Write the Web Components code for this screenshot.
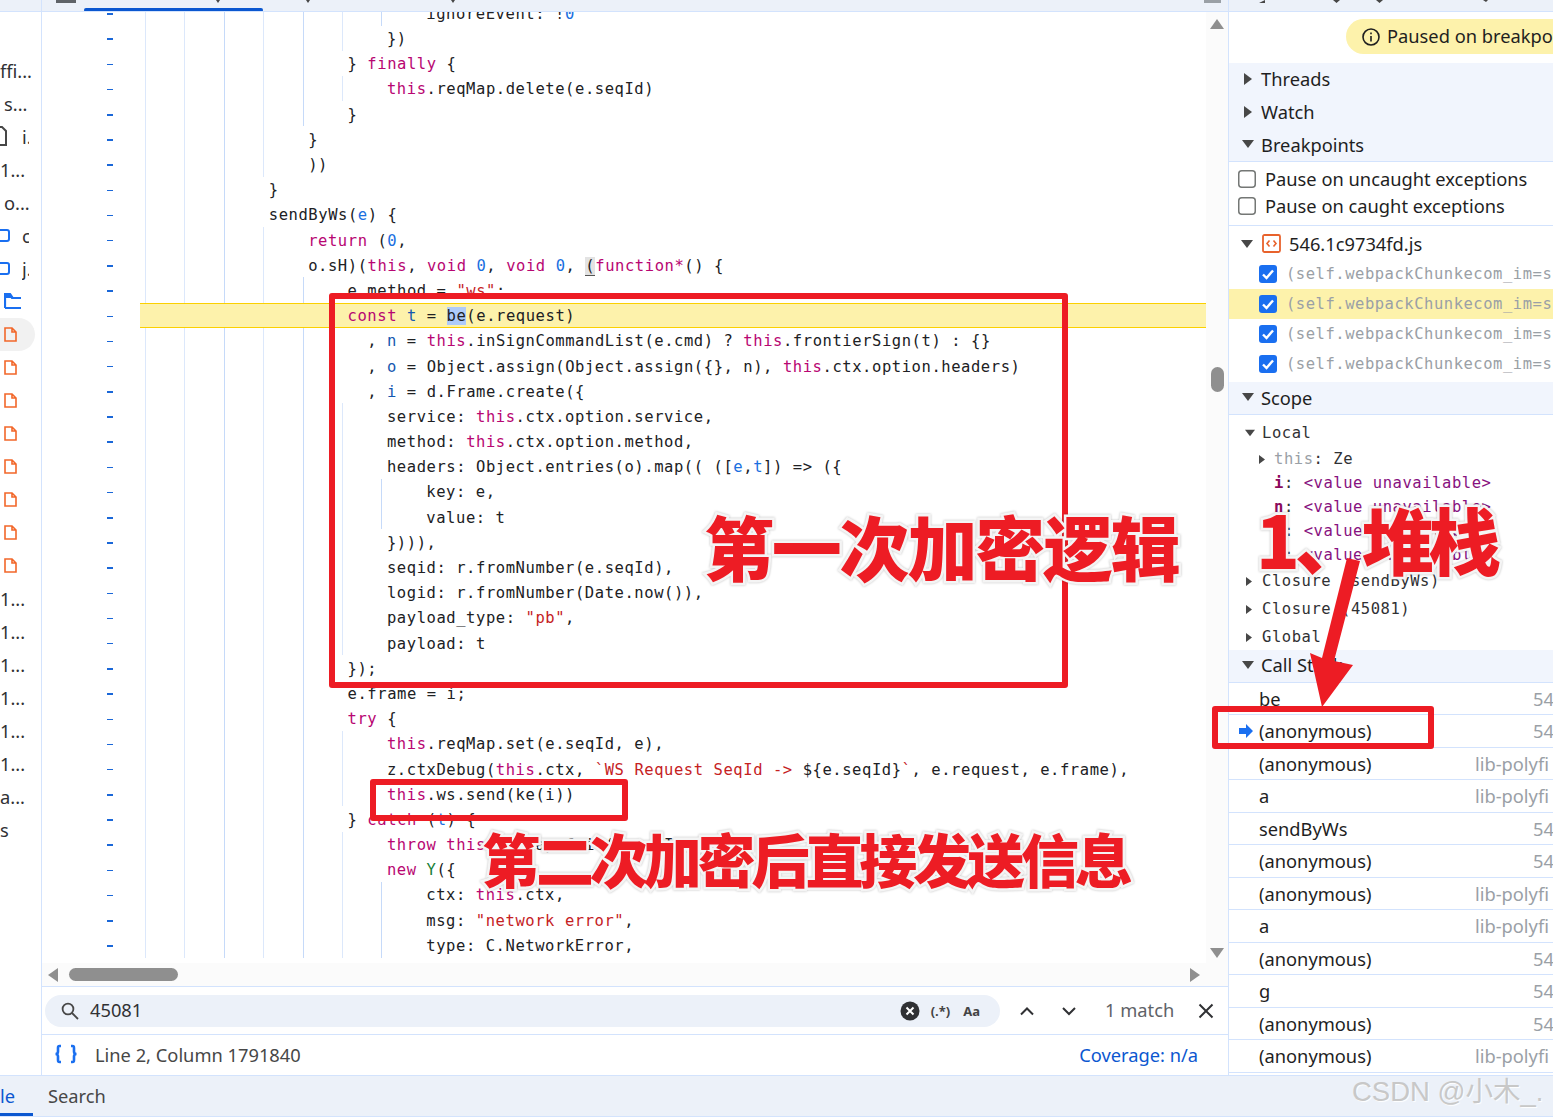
<!DOCTYPE html>
<html lang="en"><head><meta charset="utf-8"><title>DevTools Sources</title>
<style>html,body{margin:0;padding:0;background:#fff}</style></head>
<body><dt-app></dt-app>
<script>
const UI='"Noto Sans","Noto Sans CJK SC",sans-serif';
const MONO='"DejaVu Sans Mono",monospace';
const BL='#d3e3fd';
function def(name,css,html,extra){
  customElements.define(name,class extends HTMLElement{
    connectedCallback(){ if(this.shadowRoot) return;
      const r=this.attachShadow({mode:'open'});
      r.innerHTML='<style>'+css+'</style>'+(typeof html==='function'?html(this):html);
      if(extra) extra(this,r);
    }
  });
}
/* ---------- code line ---------- */
def('code-line',`
:host{display:flex;height:var(--lh);white-space:pre;align-items:stretch;box-sizing:border-box}
.gut{flex:none;width:98px;display:flex;align-items:center;padding-top:2px;box-sizing:border-box}
.gut i{display:block;width:6px;height:1.5px;background:#1a67d8;margin-left:65px}
.body{flex:1;display:flex;padding-left:5px;min-width:0}
.g{flex:none;width:39.4px;box-sizing:border-box;border-left:1px solid #dce8fb}
.g.s{border-left-color:#c6daf9}
.t{padding-left:5.6px;padding-top:1.5px;line-height:var(--lh)}
:host([hl]) .body{background:#fdf2ab;border-top:1px solid #fbd000;border-bottom:1px solid #fbd000;margin:0}
:host([hl]) .t{padding-top:0}
:host([hl]) .g{border-left-color:transparent}
`,h=>{
  const ind=+h.getAttribute('indent');const n=Math.floor(ind/4);const ex=ind-n*4;
  let g='';for(let i=0;i<n;i++)g+=`<span class="g${i%2==0&&i>0?' s':''}"></span>`;
  return `<div class="gut"><i></i></div><div class="body">${g}<span class="t" style="margin-left:${ex*9.85}px"><slot></slot></span></div>`;
});
/* ---------- code view ---------- */
const L=[
[28,'ignoreEvent: !<u>0</u>'],[24,'})'],[20,'} <k>finally</k> {'],[24,'<k>this</k>.reqMap.delete(e.seqId)'],[20,'}'],[16,'}'],[16,'))'],[12,'}'],
[12,'sendByWs(<n>e</n>) {'],[16,'<k>return</k> (<u>0</u>,'],[16,'o.sH)(<k>this</k>, <k>void</k> <u>0</u>, <k>void</k> <u>0</u>, <m>(</m><k>function*</k>() {'],
[20,'e.method = <s>"ws"</s>;'],[20,'<k>const</k> <d>t</d> = <h>be</h>(e.request)'],
[22,', <d>n</d> = <k>this</k>.inSignCommandList(e.cmd) ? <k>this</k>.frontierSign(t) : {}'],
[22,', <d>o</d> = Object.assign(Object.assign({}, n), <k>this</k>.ctx.option.headers)'],
[22,', <d>i</d> = d.Frame.create({'],[24,'service: <k>this</k>.ctx.option.service,'],[24,'method: <k>this</k>.ctx.option.method,'],
[24,'headers: Object.entries(o).map(( ([<n>e</n>,<n>t</n>]) =&gt; ({'],[28,'key: e,'],[28,'value: t'],[24,'}))),'],
[24,'seqid: r.fromNumber(e.seqId),'],[24,'logid: r.fromNumber(Date.now()),'],[24,'payload_type: <s>"pb"</s>,'],[24,'payload: t'],[20,'});'],[20,'e.frame = i;'],
[20,'<k>try</k> {'],[24,'<k>this</k>.reqMap.set(e.seqId, e),'],[24,'z.ctxDebug(<k>this</k>.ctx, <s>`WS Request SeqId -&gt; </s>${e.seqId}<s>`</s>, e.request, e.frame),'],
[24,'<k>this</k>.ws.send(ke(i))'],[20,'} <k>catch</k> (<n>t</n>) {'],[24,'<k>throw</k> <k>this</k>.reqMap.fail(e.seqId),'],[24,'<k>new</k> <v>Y</v>({'],
[28,'ctx: <k>this</k>.ctx,'],[28,'msg: <s>"network error"</s>,'],[28,'type: C.NetworkError,']
];
function tok(s){return s.replace(/<(k|u|n|d|s|h|m|v)>/g,'<span class="$1">').replace(/<\/(k|u|n|d|s|h|m|v)>/g,'</span>');}
def('dt-code',`
:host{display:block;flex:1;min-width:0;overflow:hidden;--lh:25.19px;font:15.5px/25.19px ${MONO};letter-spacing:.565px;color:#202124}
.in{margin-top:-11.6px}
.k{color:#b80672}.u{color:#1a6fe0}.n{color:#1a6fe0}.d{color:#1558b0}.s{color:#c5221f}.v{color:#188038}
.h{background:#aecbfa}.m{background:#e3e3e3;border-bottom:1px solid #555}
`,()=>'<div class="in">'+L.map((l,i)=>`<code-line indent="${l[0]}"${i==12?' hl':''}>${tok(l[1])}</code-line>`).join('')+'</div>');
/* ---------- scrollbars ---------- */
def('dt-vscroll',`
:host{display:flex;flex-direction:column;align-items:center;flex:none;width:22px;background:#fbfbfb}
svg{display:block;flex:none}.th{width:13px;height:25px;border-radius:7px;background:#8f8f8f;margin-top:338px;flex:none}
.dn{margin-top:auto;margin-bottom:5px}.up{margin-top:7px}
`,`<svg class="up" width="14" height="10" viewBox="0 0 14 10"><path d="M7 0L14 10H0z" fill="#8f8f8f"/></svg><div class="th"></div><svg class="dn" width="14" height="10" viewBox="0 0 14 10"><path d="M7 10L0 0H14z" fill="#8f8f8f"/></svg>`);
def('dt-hscroll',`
:host{display:flex;align-items:center;flex:none;height:23px;background:#fbfbfb;padding:0 28px 0 6px;box-sizing:border-box}
svg{display:block;flex:none}.th{width:109px;height:13px;border-radius:7px;background:#8f8f8f;margin-left:11px;flex:none}
.r{margin-left:auto}
`,`<svg width="10" height="14" viewBox="0 0 10 14"><path d="M0 7L10 0V14z" fill="#8f8f8f"/></svg><div class="th"></div><svg class="r" width="10" height="14" viewBox="0 0 10 14"><path d="M10 7L0 0V14z" fill="#8f8f8f"/></svg>`);
/* ---------- search bar ---------- */
def('dt-search',`
:host{display:flex;align-items:center;flex:none;height:49px;box-sizing:border-box;border-top:1px solid ${BL};border-bottom:1px solid ${BL};padding:0 12px 0 3px;font:18.3px ${UI};color:#303134}
.pill{flex:none;width:955px;height:32px;border-radius:16px;background:#ecf1f9;display:flex;align-items:center;padding:0 20px 0 15px;box-sizing:border-box}
.v{margin:-2px 0 0 10px;flex:1}.re,.aa{font:bold 13px ${UI};color:#444}.re{margin:0 13px 0 11px}
svg{display:block;flex:none}.m{margin:-2px 0 0 24px;color:#5f6368}.x{margin-left:auto}
`,`<div class="pill"><svg width="20" height="20" viewBox="0 0 20 20" fill="none" stroke="#474747" stroke-width="1.8"><circle cx="8" cy="8" r="5.4"/><path d="M12 12l6 6"/></svg><span class="v">45081</span>
<svg width="20" height="20" viewBox="0 0 20 20"><circle cx="10" cy="10" r="9.5" fill="#303134"/><path d="M6.5 6.5l7 7m0-7l-7 7" stroke="#fff" stroke-width="2"/></svg><span class="re">(.*)</span><span class="aa">Aa</span></div>
<svg style="margin-left:15px" width="24" height="24" viewBox="0 0 24 24" fill="none" stroke="#303134" stroke-width="2"><path d="M6 15.5l6-6 6 6"/></svg>
<svg style="margin-left:18px" width="24" height="24" viewBox="0 0 24 24" fill="none" stroke="#303134" stroke-width="2"><path d="M6 9l6 6 6-6"/></svg>
<span class="m">1 match</span>
<svg class="x" width="20" height="20" viewBox="0 0 20 20" fill="none" stroke="#303134" stroke-width="2"><path d="M3.500 3.500l13 13m0-13l-13 13"/></svg>`);
def('dt-status',`
:host{display:flex;align-items:center;flex:none;height:40px;padding:0 30px 2px 11px;box-sizing:border-box;font:18.3px ${UI};color:#474747}
svg{display:block;flex:none}.t{margin-left:16px}.c{margin-left:auto;color:#0b57d0}
`,`<svg width="26" height="20" viewBox="0 0 24 20" fill="none" stroke="#1a6ff0" stroke-width="2.600"><path d="M7 2H5.500C4 2 4 3 4 4v3.500C4 9 3 10 1.500 10 3 10 4 11 4 12.500V16c0 1 0 2 1.500 2H7M17 2h1.500C20 2 20 3 20 4v3.500c0 1.500 1 2.500 2.500 2.500-1.500 0-2.500 1-2.500 2.500V16c0 1 0 2-1.500 2H17"/></svg><span class="t">Line 2, Column 1791840</span><span class="c">Coverage: n/a</span>`);
def('dt-tabs',`
:host{display:flex;align-items:stretch;flex:none;height:42px;box-sizing:border-box;background:#ecf1f9;border-top:1px solid ${BL};border-bottom:1px solid ${BL};font:18.3px/40px ${UI};color:#474747}
.a{width:33px;color:#0b57d0;border-bottom:3px solid #0b57d0;border-radius:0 3px 0 0;box-sizing:border-box;overflow:hidden}
.b{margin-left:15px}
`,`<span class="a">le</span><span class="b">Search</span>`);
/* ---------- sidebar ---------- */
const doc='<svg width="13" height="15" viewBox="0 0 13 15" fill="none" stroke="#f2672a" stroke-width="1.600"><path d="M1 1h7l4 4v9H1zM8 1v4h4"/></svg>';
const sq='<svg width="10" height="15" viewBox="5 0 10 15" fill="none" stroke="#1a6ff0" stroke-width="2"><rect x="1" y="2" width="13" height="11" rx="2"/></svg>';
const side=[
['ffi...',0],['s...',4],['<svg width="7" height="22" viewBox="5 0 7 22" fill="none" stroke="#474747" stroke-width="2"><path d="M0 2h7l4 4v14H0"/></svg><span class="n i">i.</span>',0],['1...',0],['o...',4],
[sq+'<span class="n">c</span>',0],[sq+'<span class="n">j.</span>',0],
['<svg width="17" height="16" viewBox="0 0 17 16" fill="none" stroke="#1a6ff0" stroke-width="2.200"><path d="M1 15V2h5l2 3h9M1 15h16"/><path d="M1 1h5l2 3H1z" fill="#1a6ff0"/></svg>',4],
[doc,4,1],[doc,4],[doc,4],[doc,4],[doc,4],[doc,4],[doc,4],[doc,4],['1...',0],['1...',0],['1...',0],['1...',0],['1...',0],['1...',0],['a...',0],['s',0]];
def('dt-sidebar',`
:host{display:block;flex:none;width:42px;box-sizing:border-box;border-right:1px solid ${BL};padding-top:41.5px;font:18.3px/33px ${UI};color:#303134;overflow:hidden}
.r{display:flex;align-items:center;height:33px;width:35px;overflow:hidden;white-space:nowrap;box-sizing:border-box}
.r.on{background:#f1f1f1;border-radius:0 17px 17px 0}
svg{display:block;flex:none}.n{width:7px;overflow:hidden;flex:none}
.r svg+.n{margin-left:12px}.r svg+.n.i{margin-left:15px}
`,()=>side.map(s=>`<div class="r${s[2]?' on':''}" style="padding-left:${s[1]}px">${s[0]}</div>`).join(''));
/* ---------- debugger pane ---------- */
const tri=d=>d?'<svg class="tr" width="12" height="8" viewBox="0 0 12 8"><path d="M0 0H12L6 8z" fill="#474747"/></svg>':'<svg class="tr" width="8" height="12" viewBox="0 0 8 12"><path d="M0 0L8 6 0 12z" fill="#474747"/></svg>';
const tS=tri(0).replace('width="8" height="12"','width="6" height="11"');
const cb='<svg width="18" height="18" viewBox="0 0 18 18"><rect width="18" height="18" rx="3" fill="#1a6ff0"/><path d="M4 9.500l3.500 3.500L14 5.500" fill="none" stroke="#fff" stroke-width="2.400"/></svg>';
const ecb='<svg width="18" height="18" viewBox="0 0 18 18"><rect x=".75" y=".75" width="16.500" height="16.500" rx="3" fill="#fff" stroke="#747775" stroke-width="1.500"/></svg>';
const stack=[['be','54'],['(anonymous)','54'],['(anonymous)','lib-polyfi'],['a','lib-polyfi'],['sendByWs','54'],['(anonymous)','54'],['(anonymous)','lib-polyfi'],['a','lib-polyfi'],['(anonymous)','54'],['g','54'],['(anonymous)','54'],['(anonymous)','lib-polyfi']];
def('dt-debug',`
:host{display:block;flex:none;width:325px;box-sizing:border-box;border-left:1px solid ${BL};overflow:hidden;font:18.3px ${UI};color:#1f1f1f;white-space:nowrap}
svg{display:block;flex:none}
.top{height:51px;display:flex;align-items:flex-start;padding:7px 0 0 117px;box-sizing:border-box}
.pill{width:300px;flex:none;height:35px;border-radius:18px 0 0 18px;background:#fdf2ab;display:flex;align-items:center;padding-left:16px;box-sizing:border-box}
.pill span{margin:-2px 0 0 7px}
.h{display:flex;align-items:center;height:33px;background:#f1f5fd;padding:0 0 2px 11px;box-sizing:border-box}
.h .sl{width:16px;display:flex;justify-content:center;flex:none;margin-right:5px}
.b{border-bottom:1px solid ${BL}}
.p{display:flex;align-items:center;height:27px;padding-left:9px}.p span{margin-left:9px}
.pw{padding:3px 0 6px;border-bottom:1px solid ${BL}}
.f{display:flex;align-items:center;height:33px;padding:2px 0 0 12px;box-sizing:border-box}.f .ic{margin-left:9px}.f span{margin-left:8px}
.bp{display:flex;align-items:center;height:30px;padding-left:30px;font:15.5px ${MONO};letter-spacing:.53px;color:#9aa0a6}.bp span{margin-left:9px}
.bp.on{background:#fdf2ab}
.s{font:15.5px/24px ${MONO};letter-spacing:.55px;color:#303134}
.s div{display:flex;align-items:center;height:24px;white-space:pre;box-sizing:border-box}
.l0{padding-left:16px;height:26px!important}.l0 .tn{margin-left:7px}
.l1{padding:2px 0 0 30px}.l1 .tn{margin-left:9px}
.l2{padding:2px 0 0 45px}
.c{height:28px!important;padding:2px 0 0 17px}.c .tn{margin-left:10px}
.gy{color:#9aa0a6}.nm{color:#8b0a5c;font-weight:bold}.pu{color:#881280}
.sr{display:flex;align-items:center;height:32.5px;box-sizing:border-box;border-bottom:1px solid ${BL};padding-left:30px;position:relative}
.sr .loc{margin-left:auto;color:#9aa0a6;flex:none;overflow:hidden}
.sr .ar{position:absolute;left:10px}
`,`<div class="top"><div class="pill"><svg width="18" height="18" viewBox="0 0 18 18" fill="none" stroke="#1f1f1f" stroke-width="1.600"><circle cx="9" cy="9" r="8"/><path d="M9 8v5.500M9 4.500v1.800"/></svg><span>Paused on breakpo</span></div></div>
<div class="h"><div class="sl">${tri(0)}</div><span>Threads</span></div>
<div class="h"><div class="sl">${tri(0)}</div><span>Watch</span></div>
<div class="h b"><div class="sl">${tri(1)}</div><span>Breakpoints</span></div>
<div class="pw"><div class="p">${ecb}<span>Pause on uncaught exceptions</span></div><div class="p">${ecb}<span>Pause on caught exceptions</span></div></div>
<div class="f">${tri(1)}<svg class="ic" width="19" height="19" viewBox="0 0 19 19" fill="none" stroke="#e8622c"><rect x="1" y="1" width="17" height="17" rx="1.500" stroke-width="1.800"/><path d="M7.500 6.500L5 9.500l2.500 3M11.500 6.500l2.500 3-2.500 3" stroke-width="1.600"/></svg><span>546.1c9734fd.js</span></div>
${[0,1,2,3].map(i=>`<div class="bp${i==1?' on':''}">${cb}<span>(self.webpackChunkecom_im=s</span></div>`).join('')}
<div class="h b" style="margin-top:3px"><div class="sl">${tri(1)}</div><span>Scope</span></div>
<div class="s" style="padding-top:5px">
<div class="l0">${tri(1).replace('width="12"','width="10"')}<span class="tn">Local</span></div>
<div class="l1">${tS}<span class="tn"><span class="gy">this</span>: Ze</span></div>
<div class="l2"><span class="nm">i</span>: <span class="pu">&lt;value unavailable&gt;</span></div>
<div class="l2"><span class="nm">n</span>: <span class="pu">&lt;value unavailable&gt;</span></div>
<div class="l2"><span class="nm">o</span>: <span class="pu">&lt;value unavailable&gt;</span></div>
<div class="l2"><span class="nm">t</span>: <span class="pu">&lt;value unavailable&gt;</span></div>
<div class="c">${tS}<span class="tn">Closure (sendByWs)</span></div>
<div class="c">${tS}<span class="tn">Closure (45081)</span></div>
<div class="c">${tS}<span class="tn">Global</span></div>
</div>
<div class="h b" style="height:32.5px"><div class="sl">${tri(1)}</div><span>Call Stack</span></div>
${stack.map((r,i)=>`<div class="sr">${i==1?'<svg class="ar" width="14" height="14" viewBox="0 0 14 14"><path d="M0 4h7V0l7 7-7 7v-4H0z" fill="#1a6ff0"/></svg>':''}<span>${r[0]}</span><span class="loc" style="width:${r[1]=='54'?20:78}px">${r[1]}</span></div>`).join('')}`);
/* ---------- top strip ---------- */
def('dt-top',`
:host{display:block;flex:none;height:12px;background:#ecf1f9;border-bottom:1px solid ${BL};box-sizing:border-box;overflow:hidden;position:relative}
svg{display:block}
`,`<svg width="1553" height="11" viewBox="0 0 1553 11"><path d="M41.500 0V11M1228.500 0V11" stroke="${BL}"/><rect x="84" y="8" width="179" height="4" rx="2" fill="#0b57d0"/><rect x="56" y="0" width="20" height="3" fill="#5f6368"/><rect x="1204" y="0" width="17" height="3" fill="#9aa0a6"/><path d="M1259 3l6-3v3zM1333 0h7l-3.500 3zM1376 0h7l-3.500 3z" fill="#474747"/><path d="M216 0h4l-2 3zM306 0h4l-2 3zM451 0h4l-2 3zM1483 0l3 2 2-2z" fill="#474747"/></svg>`);
/* ---------- annotation overlay ---------- */
def('dt-annot',`
:host{position:absolute;left:0;top:0;width:1553px;height:1120px;display:block;pointer-events:none}
.box{position:absolute;box-sizing:border-box;border:6px solid #ed1c24;border-radius:3px}
svg{position:absolute;left:0;top:0}
.t{position:absolute;font-family:"Noto Sans CJK SC",sans-serif;font-weight:900;color:#ed1c24;-webkit-text-stroke:5px #f4f4f4;paint-order:stroke fill;white-space:nowrap;filter:drop-shadow(0 0 1px rgba(0,0,0,.25))}
.wm{position:absolute;left:1352px;top:1070px;font:27.5px/44px "Liberation Sans","Noto Sans CJK SC",sans-serif;color:#c8c8c8;text-shadow:1px 1px 1px #fff;white-space:nowrap}
`,`<div class="box" style="left:329px;top:293px;width:739px;height:395px"></div>
<div class="box" style="left:370px;top:779px;width:258px;height:42px"></div>
<div class="box" style="left:1212px;top:706px;width:222px;height:43px"></div>
<svg width="1553" height="1120" viewBox="0 0 1553 1120"><path d="M1347 558L1360 561 1334 661 1353 665 1322 707 1310 653 1322 658z" fill="#ed1c24"/></svg>
<div class="t" style="left:704px;top:495px;font-size:70px;line-height:102px;letter-spacing:-2.200px">第一次加密逻辑</div>
<div class="t" style="left:482px;top:814px;font-size:58px;line-height:88px;letter-spacing:-4.100px">第二次加密后直接发送信息</div>
<div class="t" style="left:1256px;top:486px;font-size:72px;line-height:104px;letter-spacing:-5px">1、堆栈</div>
<div class="wm">CSDN @小木_.</div>`);
/* ---------- app ---------- */
def('dt-app',`
:host{display:flex;flex-direction:column;width:1553px;height:1120px;position:relative;overflow:hidden;background:#fff}
.m{flex:none;height:1063px;display:flex;min-height:0}
.ed{flex:1;min-width:0;display:flex;flex-direction:column}
.cd{flex:1;min-height:0;display:flex}
`,`<dt-top></dt-top><div class="m"><dt-sidebar></dt-sidebar><div class="ed"><div class="cd"><dt-code></dt-code><dt-vscroll></dt-vscroll></div><dt-hscroll></dt-hscroll><dt-search></dt-search><dt-status></dt-status></div><dt-debug></dt-debug></div><dt-tabs></dt-tabs><dt-annot></dt-annot>`);
</script></body></html>
